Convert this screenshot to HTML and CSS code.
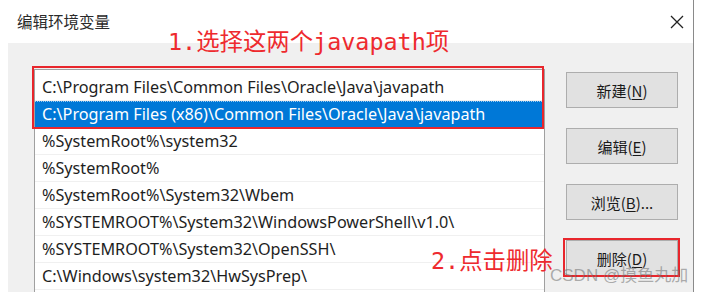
FILE: index.html
```html
<!DOCTYPE html>
<html lang="zh-CN">
<head>
  <meta charset="UTF-8" />
  <title>编辑环境变量</title>
  <link rel="stylesheet" href="styles.css">
</head>
<body>

<div class="window">
  <div class="titlebar">
    <span class="title">编辑环境变量</span>
    <svg class="close" width="14" height="14" viewBox="0 0 14 14">
      <path d="M1 1 L13 13 M13 1 L1 13" stroke="#222" stroke-width="1.3" fill="none" />
    </svg>
  </div>

  <div class="content">
    <div class="path-list">
      <div class="row">C:\Program Files\Common Files\Oracle\Java\javapath</div>
      <div class="row selected">C:\Program Files (x86)\Common Files\Oracle\Java\javapath</div>
      <div class="row">%SystemRoot%\system32</div>
      <div class="row">%SystemRoot%</div>
      <div class="row">%SystemRoot%\System32\Wbem</div>
      <div class="row">%SYSTEMROOT%\System32\WindowsPowerShell\v1.0\</div>
      <div class="row">%SYSTEMROOT%\System32\OpenSSH\</div>
      <div class="row">C:\Windows\system32\HwSysPrep\</div>
    </div>

    <div class="buttons">
      <button class="btn">新建(<u>N</u>)</button>
      <button class="btn">编辑(<u>E</u>)</button>
      <button class="btn">浏览(<u>B</u>)...</button>
      <button class="btn">删除(<u>D</u>)</button>
    </div>
  </div>
</div>

<!-- annotations drawn over the screenshot -->
<div class="mark mark-list"></div>
<div class="mark mark-delete"></div>
<div class="note note-1">1.选择这两个javapath项</div>
<div class="note note-2">2.点击删除</div>
<div class="watermark">CSDN @摸鱼丸加</div>

</body>
</html>
```

FILE: styles.css
```css
body { margin: 0; width: 701px; height: 292px; overflow: hidden; background: #fff; position: relative; font-family: "Noto Sans", "Noto Sans CJK SC", sans-serif; }
.window { width: 693px; height: 292px; overflow: hidden; border-right: 1px solid #8a8a8a; display: flex; flex-direction: column; }
.titlebar { height: 43px; flex: none; display: flex; align-items: center; justify-content: space-between; padding: 0 9px 0 17px; box-sizing: border-box; }
.title { font-size: 15.5px; color: #2a2a2a; font-family: "Noto Sans CJK SC", sans-serif; margin-top: -1px; }
.content { flex: 1; min-height: 0; margin-left: 8px; background: #f0f0f0; display: flex; align-items: flex-start; padding: 26px 0 0 26px; }
.path-list { width: 511px; height: 223px; overflow: hidden; box-sizing: border-box; background: #fff; border: 1px solid #a0a0a0; border-bottom: none; padding-top: 4px; flex: none; }
.row { height: 27px; line-height: 26px; box-sizing: border-box; border-bottom: 1px solid #f0f0f0; padding-left: 7px; font-size: 16.2px; color: #1e1e1e; white-space: nowrap; }
.row.selected { background: #0078d7; color: #fff; border-top: 1px dotted #9ec9ee; line-height: 25px; border-bottom-color: #0078d7; }
.buttons { display: flex; flex-direction: column; gap: 20px; margin: 3px 0 0 21px; }
.btn { width: 112px; height: 36px; background: #e1e1e1; border: 1px solid #adadad; font-family: "Noto Sans CJK SC", sans-serif; font-size: 15px; color: #1a1a1a; padding: 0; }
.btn u { text-underline-offset: 2px; }
.mark { position: absolute; border: 2px solid #e8262c; box-sizing: border-box; }
.mark-list { left: 32px; top: 66px; width: 512px; height: 63px; }
.mark-delete { left: 563px; top: 238px; width: 117px; height: 39px; }
.note { position: absolute; color: #ee2a2e; font-family: "DejaVu Sans Mono", "Noto Sans CJK SC", monospace; font-size: 23.4px; line-height: 1; }
.note-1 { left: 168px; top: 31px; }
.note-2 { left: 431px; top: 250px; }
.watermark { position: absolute; left: 550px; top: 261px; font-size: 17px; color: rgba(110, 110, 110, 0.55); font-family: "Liberation Sans", "Noto Sans CJK SC", sans-serif; }
```
